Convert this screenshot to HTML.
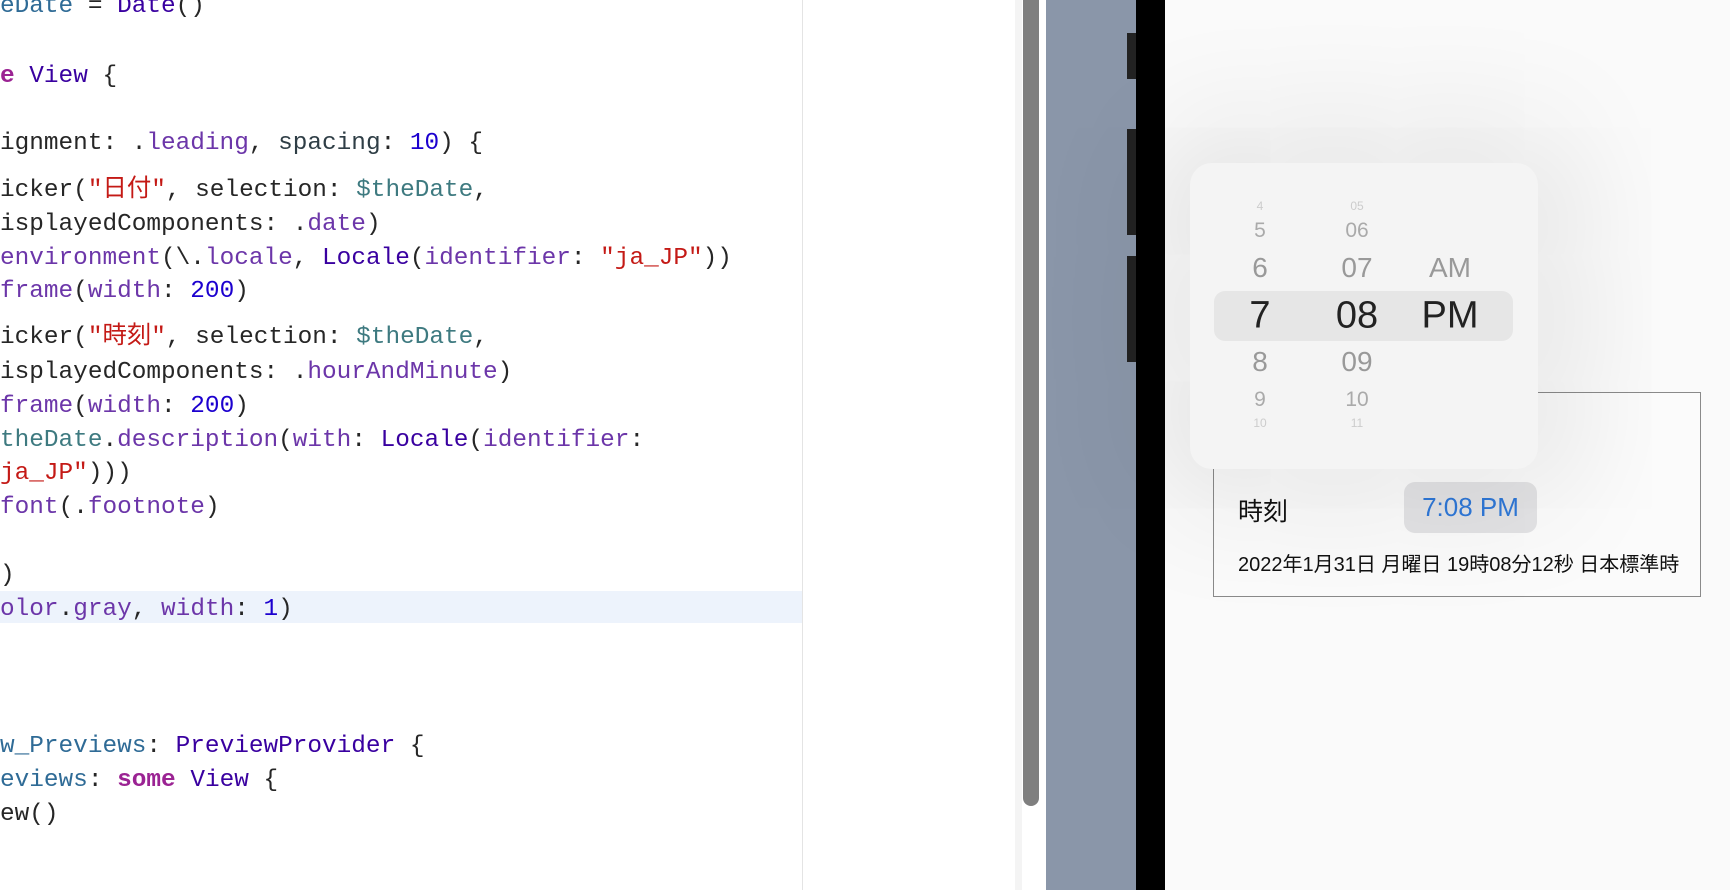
<!DOCTYPE html>
<html><head><meta charset="utf-8"><style>
body{margin:0;width:1730px;height:890px;overflow:hidden;background:#fff;position:relative;font-family:"Liberation Sans","Noto Sans CJK JP",sans-serif}
.c{position:absolute;left:0;height:34px;line-height:34px;font-family:"Liberation Mono","Noto Sans CJK JP",monospace;font-size:24.4px;color:#262626;white-space:pre}
.p{color:#6c36a9}.n{color:#1c00cf}.s{color:#c41a16}.t{color:#3e7a80}.d{color:#3900a0}.k{color:#9b2393;font-weight:bold}.b{color:#2f6b96}.g{color:#2f3e46}
.abs{position:absolute}
.num{position:absolute;transform:translate(-50%,-50%);font-family:"Liberation Sans",sans-serif;white-space:nowrap}
</style></head><body>
<div class="abs" style="left:0;top:591px;width:802px;height:32px;background:#edf3fc"></div>
<div class="abs" style="left:802px;top:0;width:1px;height:890px;background:#e4e4e4"></div>
<div class="abs" style="left:1015px;top:0;width:7px;height:890px;background:#f4f4f4"></div>
<div class="c" style="top:-10px"><span class="b">eDate</span> = <span class="d">Date</span>()</div>
<div class="c" style="top:60px"><span class="k">e</span> <span class="d">View</span> {</div>
<div class="c" style="top:127px">ignment: .<span class="p">leading</span>, <span class="g">spacing</span>: <span class="n">10</span>) {</div>
<div class="c" style="top:174px">icker(<span class="s">"日付"</span>, selection: <span class="t">$theDate</span>,</div>
<div class="c" style="top:208px">isplayedComponents: .<span class="p">date</span>)</div>
<div class="c" style="top:242px"><span class="p">environment</span>(\.<span class="p">locale</span>, <span class="d">Locale</span>(<span class="p">identifier</span>: <span class="s">"ja_JP"</span>))</div>
<div class="c" style="top:275px"><span class="p">frame</span>(<span class="p">width</span>: <span class="n">200</span>)</div>
<div class="c" style="top:321px">icker(<span class="s">"時刻"</span>, selection: <span class="t">$theDate</span>,</div>
<div class="c" style="top:356px">isplayedComponents: .<span class="p">hourAndMinute</span>)</div>
<div class="c" style="top:390px"><span class="p">frame</span>(<span class="p">width</span>: <span class="n">200</span>)</div>
<div class="c" style="top:424px"><span class="t">theDate</span>.<span class="p">description</span>(<span class="p">with</span>: <span class="d">Locale</span>(<span class="p">identifier</span>:</div>
<div class="c" style="top:457px"><span class="s">ja_JP"</span>)))</div>
<div class="c" style="top:491px"><span class="p">font</span>(.<span class="p">footnote</span>)</div>
<div class="c" style="top:559px">)</div>
<div class="c" style="top:593px"><span class="p">olor</span>.<span class="p">gray</span>, <span class="p">width</span>: <span class="n">1</span>)</div>
<div class="c" style="top:730px"><span class="b">w_Previews</span>: <span class="d">PreviewProvider</span> {</div>
<div class="c" style="top:764px"><span class="b">eviews</span>: <span class="k">some</span> <span class="d">View</span> {</div>
<div class="c" style="top:798px">ew()</div>

<div class="abs" style="left:1023px;top:0;width:16px;height:806px;background:#7f7f7f;border-radius:0 0 8px 8px"></div>
<div class="abs" style="left:1046px;top:0;width:90px;height:890px;background:#8a96a9"></div>
<div class="abs" style="left:1127px;top:33px;width:9px;height:46px;background:#222"></div>
<div class="abs" style="left:1127px;top:129px;width:9px;height:106px;background:#222"></div>
<div class="abs" style="left:1127px;top:256px;width:9px;height:106px;background:#222"></div>
<div class="abs" style="left:1136px;top:0;width:29px;height:890px;background:#000"></div>
<div class="abs" style="left:1165px;top:0;width:565px;height:890px;background:#fafafa"></div>

<div class="abs" style="left:1213px;top:392px;width:486px;height:203px;border:1px solid #8a8a8a;background:#fbfbfb"></div>
<div class="abs" style="left:1238px;top:492px;font-size:25px;color:#111">時刻</div>
<div class="abs" style="left:1404px;top:482px;width:133px;height:51px;background:#e3e3e5;border-radius:11px;text-align:center;line-height:51px;font-size:26px;color:#2f78d8">7:08 PM</div>
<div class="abs" style="left:1238px;top:548px;font-size:20px;color:#111;white-space:nowrap">2022年1月31日 月曜日 19時08分12秒 日本標準時</div>

<div class="abs" style="left:1190px;top:163px;width:348px;height:306px;background:#f4f4f4;border-radius:22px;box-shadow:0 0 120px 40px rgba(0,0,0,0.09)"></div>
<div class="abs" style="left:1214px;top:291px;width:299px;height:50px;background:#e6e6e6;border-radius:11px"></div>
<div class="num" style="left:1260px;top:206px;font-size:12px;color:#ccc">4</div>
<div class="num" style="left:1357px;top:206px;font-size:12px;color:#ccc">05</div>
<div class="num" style="left:1260px;top:231px;font-size:21px;color:#aaa">5</div>
<div class="num" style="left:1357px;top:231px;font-size:21px;color:#aaa">06</div>
<div class="num" style="left:1260px;top:268px;font-size:28px;color:#999">6</div>
<div class="num" style="left:1357px;top:268px;font-size:28px;color:#999">07</div>
<div class="num" style="left:1450px;top:268px;font-size:28px;color:#999">AM</div>
<div class="num" style="left:1260px;top:316px;font-size:38px;color:#222">7</div>
<div class="num" style="left:1357px;top:316px;font-size:38px;color:#222">08</div>
<div class="num" style="left:1450px;top:316px;font-size:38px;color:#222">PM</div>
<div class="num" style="left:1260px;top:362px;font-size:28px;color:#999">8</div>
<div class="num" style="left:1357px;top:362px;font-size:28px;color:#999">09</div>
<div class="num" style="left:1260px;top:400px;font-size:21px;color:#aaa">9</div>
<div class="num" style="left:1357px;top:400px;font-size:21px;color:#aaa">10</div>
<div class="num" style="left:1260px;top:423px;font-size:12px;color:#ccc">10</div>
<div class="num" style="left:1357px;top:423px;font-size:12px;color:#ccc">11</div>
</body></html>
